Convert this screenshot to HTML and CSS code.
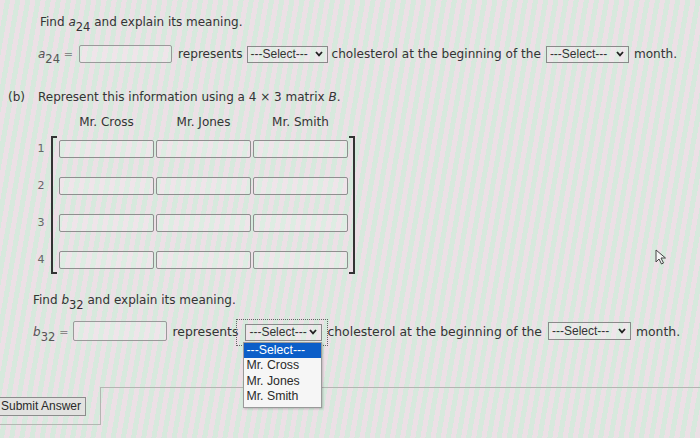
FILE: index.html
```html
<!DOCTYPE html>
<html lang="en">
<head>
<meta charset="utf-8">
<title>Matrix question</title>
<link rel="stylesheet" href="styles.css">
</head>
<body>
<div class="page">
  <section class="part-a">
    <p class="q">Find <var>a</var><sub>24</sub> and explain its meaning.</p>
    <div class="answer-row">
      <span class="lhs"><var class="lv">a</var><sub>24</sub> <span class="eq">=</span></span>
      <span class="field field-a"></span>
      <span class="word w-rep">represents</span>
      <span class="select sel-1">---Select--- <svg class="chev" viewBox="0 0 8 6" width="8" height="6"><path d="M1 1 L4 4.4 L7 1" fill="none" stroke="#222" stroke-width="1.8"/></svg></span>
      <span class="word w-chol">cholesterol at the beginning of the</span>
      <span class="select sel-2">---Select--- <svg class="chev" viewBox="0 0 8 6" width="8" height="6"><path d="M1 1 L4 4.4 L7 1" fill="none" stroke="#222" stroke-width="1.8"/></svg></span>
      <span class="word w-month">month.</span>
    </div>
  </section>

  <section class="part-b">
    <p class="q"><span class="plabel">(b)</span>Represent this information using a 4 × 3 matrix <var>B</var>.</p>
    <div class="headers">
      <span>Mr. Cross</span>
      <span>Mr. Jones</span>
      <span>Mr. Smith</span>
    </div>
    <div class="matrix">
      <div class="row-labels">
        <span>1</span><span>2</span><span>3</span><span>4</span>
      </div>
      <div class="bracket bracket-l"></div>
      <div class="cells">
        <span class="cell"></span><span class="cell"></span><span class="cell"></span>
        <span class="cell"></span><span class="cell"></span><span class="cell"></span>
        <span class="cell"></span><span class="cell"></span><span class="cell"></span>
        <span class="cell"></span><span class="cell"></span><span class="cell"></span>
      </div>
      <div class="bracket bracket-r"></div>
    </div>
  </section>

  <section class="part-b2">
    <p class="q">Find <var>b</var><sub>32</sub> and explain its meaning.</p>
    <div class="answer-row answer-row-b">
      <span class="lhs"><var class="lv">b</var><sub>32</sub> <span class="eq">=</span></span>
      <span class="field field-b"></span>
      <span class="word w-rep-b">represents</span>
      <span class="focus-wrap">
        <span class="select sel-3">---Select--- <svg class="chev" viewBox="0 0 8 6" width="8" height="6"><path d="M1 1 L4 4.4 L7 1" fill="none" stroke="#222" stroke-width="1.8"/></svg></span>
        <span class="dropdown">
          <span class="opt opt-active">---Select---</span>
          <span class="opt">Mr. Cross</span>
          <span class="opt">Mr. Jones</span>
          <span class="opt">Mr. Smith</span>
        </span>
      </span>
      <span class="word w-chol-b">cholesterol at the beginning of the</span>
      <span class="select sel-4">---Select--- <svg class="chev" viewBox="0 0 8 6" width="8" height="6"><path d="M1 1 L4 4.4 L7 1" fill="none" stroke="#222" stroke-width="1.8"/></svg></span>
      <span class="word w-month">month.</span>
    </div>
  </section>

  <footer class="footer">
    <div class="submit-area">
      <span class="submit">Submit Answer</span>
    </div>
    <div class="footer-rest"></div>
  </footer>

  <svg class="cursor" viewBox="0 0 12 16" width="12" height="16"><path d="M1 1 L1 13 L4 10 L6.5 15 L8.5 14 L6 9 L10.5 9 Z" fill="#f4f4f4" stroke="#444" stroke-width="1"/></svg>
</div>
</body>
</html>
```

FILE: styles.css
```css
html, body {
  margin: 0;
  padding: 0;
}

body {
  width: 700px;
  height: 438px;
  overflow: hidden;
  background: #e4e6e2;
  font-family: "DejaVu Sans", Verdana, sans-serif;
  font-size: 12px;
  color: #343434;
}

.page {
  position: relative;
  width: 700px;
  height: 438px;
  background: repeating-linear-gradient(100deg, #ece0e6 0 5px, #d7e9dd 5px 10px);
}

var {
  font-style: italic;
}

sub {
  font-size: 11.5px;
  vertical-align: -5px;
  line-height: 0;
}

.q {
  margin: 0;
  height: 18px;
  line-height: 18px;
  white-space: nowrap;
}

.part-a {
  padding: 13px 0 0 40px;
}

.answer-row {
  display: flex;
  align-items: center;
  height: 18px;
  margin-top: 14px;
  white-space: nowrap;
  font-size: 12.1px;
}

.lhs {
  margin-left: -2px;
  color: #555;
}

.lv {
  font-size: 12px;
}

.eq {
  color: #888;
  font-size: 11px;
}

.field {
  display: inline-block;
  box-sizing: border-box;
  border: 1px solid #9a9a9a;
  border-radius: 2px;
  background: rgba(255, 255, 255, 0.18);
}

.field-a {
  width: 93px;
  height: 18px;
  margin-left: 6px;
}

.word {
  display: inline-block;
}

.w-rep {
  margin-left: 6px;
}

.select {
  display: inline-flex;
  align-items: center;
  justify-content: space-between;
  box-sizing: border-box;
  height: 17px;
  padding: 0 4px 0 3px;
  border: 1px solid #8a8a8a;
  background: rgba(255, 255, 255, 0.2);
  font-family: "Liberation Sans", Arial, sans-serif;
  font-size: 12px;
  color: #333;
}

.chev {
  display: block;
}

.sel-1 {
  width: 81px;
  margin-left: 4px;
}

.w-chol {
  margin-left: 4px;
}

.sel-2 {
  width: 83px;
  margin-left: 5px;
}

.w-month {
  margin-left: 5px;
}

/* part b */
.part-b {
  padding: 25px 0 0 8px;
}

.plabel {
  display: inline-block;
  width: 30px;
}

.headers {
  display: grid;
  grid-template-columns: 95px 95px 95px;
  column-gap: 2px;
  margin: 7px 0 0 51px;
  height: 18px;
  line-height: 18px;
  text-align: center;
}

.matrix {
  display: flex;
  margin: 5px 0 0 26px;
  height: 138px;
}

.row-labels {
  display: grid;
  grid-template-rows: repeat(4, 18px);
  row-gap: 19px;
  padding-top: 4px;
  width: 14px;
  font-size: 11px;
  color: #666;
  text-align: center;
  line-height: 18px;
}

.bracket {
  box-sizing: border-box;
  width: 6px;
  height: 138px;
  border-top: 2px solid #333;
  border-bottom: 2px solid #333;
}

.bracket-l {
  margin-left: 3px;
  border-left: 2px solid #333;
}

.bracket-r {
  margin-left: 1px;
  border-right: 2px solid #333;
}

.cells {
  display: grid;
  grid-template-columns: repeat(3, 95px);
  grid-template-rows: repeat(4, 18px);
  column-gap: 2px;
  row-gap: 19px;
  padding-top: 4px;
  margin-left: 2px;
}

.cell {
  box-sizing: border-box;
  border: 1px solid #8f8f8f;
  border-radius: 2px;
  background: rgba(255, 255, 255, 0.18);
}

/* part b2 */
.part-b2 {
  padding: 17px 0 0 33px;
}

.answer-row-b {
  height: 20px;
  margin-top: 12px;
  font-size: 12.4px;
}

.answer-row-b .lhs {
  margin-left: 0;
}

.field-b {
  width: 94px;
  height: 20px;
  margin-left: 5px;
}

.w-rep-b {
  margin-left: 5px;
}

.focus-wrap {
  position: relative;
  display: inline-flex;
  align-items: center;
  box-sizing: border-box;
  height: 27px;
  padding: 0 5px 0 8px;
  margin: 2px 0 0 -2px;
  border: 1px dotted #666;
}

.sel-3 {
  width: 77px;
}

.dropdown {
  position: absolute;
  left: 6px;
  top: 22px;
  display: flex;
  flex-direction: column;
  box-sizing: border-box;
  width: 79px;
  padding: 0 0 2px;
  background: #f6f6f6;
  border: 1px solid #9a9a9a;
  box-shadow: 1px 1px 2px rgba(0, 0, 0, 0.2);
  font-family: "Liberation Sans", Arial, sans-serif;
  font-size: 12.3px;
  color: #2a2a2a;
  z-index: 2;
}

.opt {
  height: 15.5px;
  line-height: 15.5px;
  padding-left: 2px;
}

.opt-active {
  background: #0c5ec8;
  color: #fff;
}

.w-chol-b {
  margin-left: -1px;
}

.sel-4 {
  width: 83px;
  height: 18px;
  margin-left: 6px;
}

/* footer */
.footer {
  display: flex;
  margin-top: 46px;
}

.submit-area {
  box-sizing: border-box;
  width: 101px;
  height: 38px;
  padding-top: 10px;
  border-right: 1px solid #b4b6b2;
  border-bottom: 1px solid #b4b6b2;
}

.submit {
  display: inline-block;
  box-sizing: border-box;
  height: 19px;
  line-height: 17px;
  margin-left: -4px;
  padding: 0 4px;
  border: 1px solid #8c8c8c;
  background: #e2e2e0;
  font-family: "Liberation Sans", Arial, sans-serif;
  font-size: 12px;
  color: #2a2a2a;
}

.footer-rest {
  flex: 1;
  border-top: 1px solid #b4b6b2;
}

.cursor {
  position: absolute;
  left: 655px;
  top: 249px;
}
```
